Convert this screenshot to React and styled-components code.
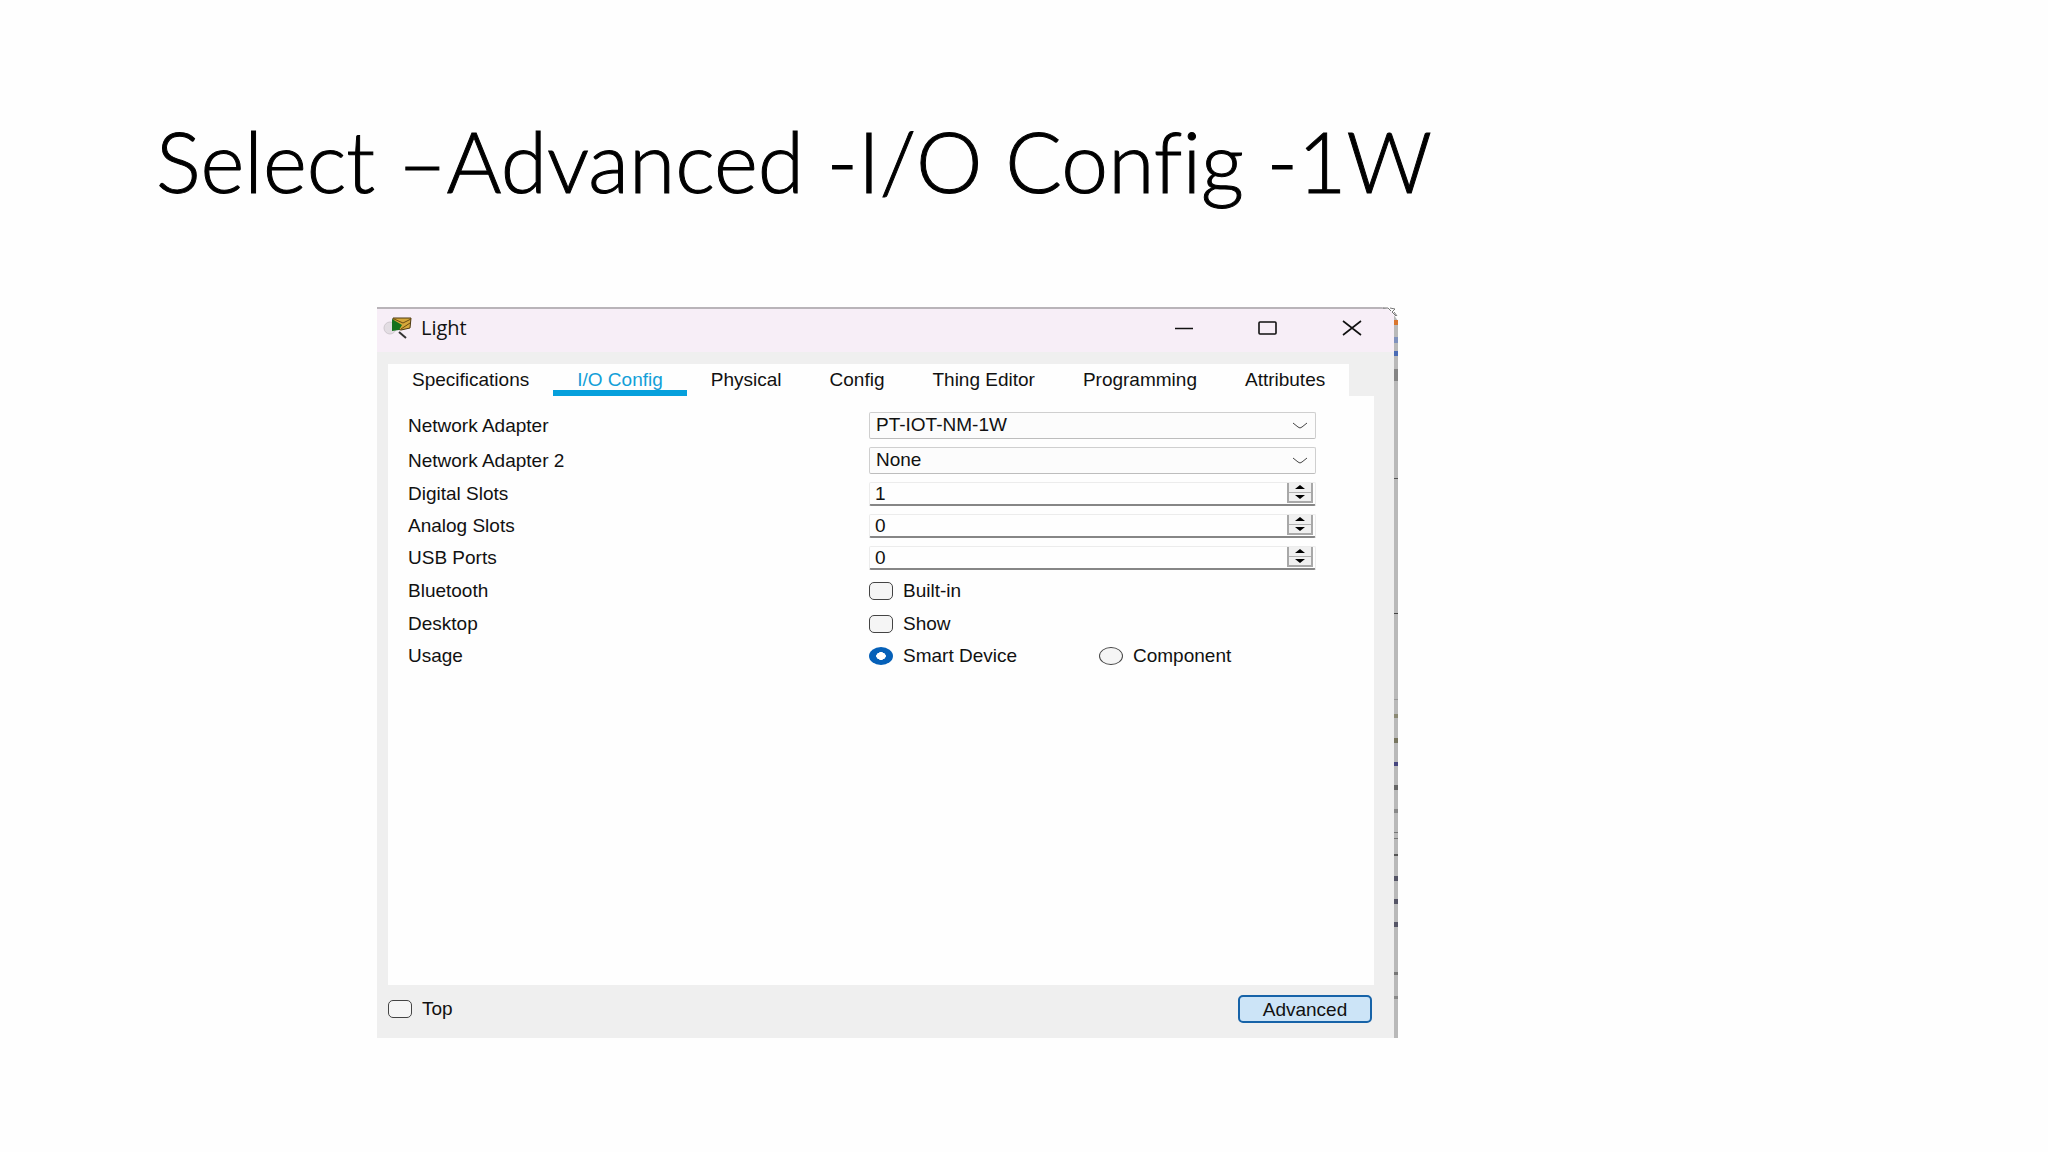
import React from 'react';
import styled, { createGlobalStyle } from 'styled-components';

const GlobalStyle = createGlobalStyle`
  *, *::before, *::after {
    box-sizing: border-box;
  }

  body {
    margin: 0;
    background: #fefefe;
    color: #111;
    font-family: "Liberation Sans", Arial, sans-serif;
    font-size: 19px;
    line-height: 24px;
  }

  button, input, select {
    font: inherit;
    color: inherit;
  }
`;

const Slide = styled.main`
  display: flex;
  flex-direction: column;
  min-height: 100vh;
  padding: 111px 156px 114px;
`;

const Title = styled.h1`
  margin: 0 0 96px;
  font-family: Lato, sans-serif;
  font-size: 84px;
  font-variant-ligatures: none;
  font-weight: 300;
  line-height: 100px;
  color: #000;
  -webkit-text-stroke: 1px #000;
`;

const Window = styled.section`
  position: relative;
  display: flex;
  flex: 1;
  flex-direction: column;
  width: 100%;
  max-width: 1021px;
  margin-left: 221px;
  border-top: 2px solid #b9b4b9;
  border-right: 4px solid #b9b9b9;
  background: #efefef;
`;

const TitleBar = styled.header`
  display: flex;
  align-items: center;
  height: 43px;
  padding: 0 30px 5px 6px;
  background: #f7eef7;
`;

const WindowName = styled.h2`
  flex: 1;
  margin: 0 0 0 8px;
  font-family: "Open Sans", sans-serif;
  font-size: 20px;
  font-weight: 400;
`;

const WindowButtons = styled.div`
  display: flex;
  gap: 60px;
`;

const IconButton = styled.button`
  display: flex;
  padding: 0;
  border: 0;
  background: none;
`;

const Body = styled.div`
  display: flex;
  flex: 1;
  flex-direction: column;
  padding: 12px 20px 0 11px;
`;

const Tabs = styled.nav`
  display: flex;
  align-self: flex-start;
  height: 32px;
  background: #fefefe;
`;

const Tab = styled.button`
  padding: 6px 24px 0;
  border: 0;
  border-bottom: 6px solid ${({ $active }) => ($active ? '#06a0dc' : 'transparent')};
  background: none;
  line-height: 20px;
  white-space: nowrap;

  && {
    color: ${({ $active }) => ($active ? '#129fd8' : '#111')};
  }
`;

const Panel = styled.form`
  display: flex;
  flex: 1;
  flex-direction: column;
  gap: 8px;
  padding: 16px 58px 16px 20px;
  background: #fefefe;
`;

const Row = styled.div`
  display: grid;
  grid-template-columns: 461fr 447fr;
  align-items: center;
  height: ${({ $height }) => $height}px;
`;

const SelectBox = styled.div`
  position: relative;
  height: 27px;
`;

const Select = styled.select`
  appearance: none;
  width: 100%;
  height: 100%;
  padding: 0 40px 2px 6px;
  border: 1px solid #cfcfcf;
  border-bottom-color: #bdbdbd;
  border-radius: 2px;
  background: #fcfcfc;
`;

const SelectArrow = styled.svg`
  position: absolute;
  top: 10px;
  right: 8px;
  pointer-events: none;
`;

const SpinBox = styled.div`
  display: flex;
  height: 24px;
  padding-right: 2px;
  border: 1px solid #ececec;
  border-bottom: 2px solid #868686;
  border-radius: 2px;
`;

const SpinInput = styled.input`
  flex: 1;
  min-width: 0;
  padding: 0 5px;
  border: 0;
  background: none;
`;

const SpinButtons = styled.div`
  display: flex;
  flex-direction: column;
  width: 26px;
  height: 20px;
  border: 1px solid #a8a8a8;
  border-width: 0 2px 2px;
  background: #f0f0f0;
`;

const SpinButton = styled.button`
  display: flex;
  flex: 1;
  align-items: center;
  justify-content: center;
  padding: 0;
  border: 0;
  background: none;

  & + & {
    border-top: 1px solid #b0b0b0;
  }
`;

const Choices = styled.div`
  display: grid;
  grid-template-columns: 230fr 217fr;
`;

const Choice = styled.label`
  display: flex;
  align-items: center;
  gap: 10px;
  white-space: nowrap;
`;

const Checkbox = styled.input`
  appearance: none;
  width: 24px;
  height: 18px;
  margin: 0;
  border: 1px solid #444;
  border-radius: 5px;
  background: #f5f5f5;
`;

const Radio = styled(Checkbox)`
  border-radius: 50%;

  &:checked {
    border: 0;
    background: radial-gradient(ellipse 5px 4px, #fff 90%, #0560b8 100%);
  }
`;

const Footer = styled.footer`
  display: flex;
  align-items: center;
  justify-content: space-between;
  height: 53px;
  padding: 0 22px 5px 11px;
`;

const AdvancedButton = styled.button`
  width: 134px;
  height: 28px;
  padding: 1px 0 0;
  border: 2px solid #1763a8;
  border-radius: 5px;
  background: #cce4f7;
`;

const EdgeMarks = styled.svg`
  position: absolute;
  top: -2px;
  right: -4px;
`;

const tabs = [
  'Specifications',
  'I/O Config',
  'Physical',
  'Config',
  'Thing Editor',
  'Programming',
  'Attributes',
];

const adapters = [
  { id: 'adapter-1', label: 'Network Adapter', value: 'PT-IOT-NM-1W' },
  { id: 'adapter-2', label: 'Network Adapter 2', value: 'None' },
];

const counters = [
  { id: 'digital-slots', label: 'Digital Slots', value: '1' },
  { id: 'analog-slots', label: 'Analog Slots', value: '0' },
  { id: 'usb-ports', label: 'USB Ports', value: '0' },
];

// [offset from the top, height, colour]
const edgeMarks = [
  [13, 5, '#d9762f'],
  [30, 6, '#8092bd'],
  [44, 5, '#4a6bb5'],
  [62, 12, '#858585'],
  [171, 1, '#555'],
  [306, 1, '#444'],
  [392, 1, '#999'],
  [407, 4, '#8c8a75'],
  [431, 5, '#77755f'],
  [455, 4, '#45457e'],
  [478, 5, '#666'],
  [502, 4, '#888'],
  [525, 1, '#777'],
  [531, 1, '#777'],
  [547, 2, '#555'],
  [569, 5, '#556'],
  [592, 5, '#556'],
  [615, 5, '#556'],
  [665, 3, '#777'],
  [689, 3, '#888'],
];

function AppIcon() {
  return (
    <svg width="30" height="22" viewBox="0 0 30 22" aria-hidden="true">
      <ellipse cx="7" cy="11" rx="6" ry="6" fill="#e3dde3" stroke="#cfc8cf" />
      <path d="M10 1h18l-1 10-9 2-8-2z" fill="#d6a83a" stroke="#4d3a12" />
      <path d="M11 2l9 4 8-4M18 12l9-6" fill="none" stroke="#6b4c12" />
      <path d="M9 2l10 6-3 5-7 1z" fill="#16721d" />
      <path d="M16 15l7 6" stroke="#333" strokeWidth="2" />
    </svg>
  );
}

function Spin({ id, label, value }) {
  return (
    <SpinBox>
      <SpinInput id={id} type="text" inputMode="numeric" defaultValue={value} />
      <SpinButtons>
        <SpinButton type="button" aria-label={`Increase ${label}`}>
          <svg width="10" height="4" viewBox="0 0 10 4">
            <path d="M0 4l5-4 5 4z" />
          </svg>
        </SpinButton>
        <SpinButton type="button" aria-label={`Decrease ${label}`}>
          <svg width="10" height="4" viewBox="0 0 10 4">
            <path d="M0 0l5 4 5-4z" />
          </svg>
        </SpinButton>
      </SpinButtons>
    </SpinBox>
  );
}

function App() {
  return (
    <>
      <GlobalStyle />
      <Slide>
        <Title>Select –Advanced -I/O Config -1W</Title>

        <Window>
          <TitleBar>
            <AppIcon />
            <WindowName>Light</WindowName>
            <WindowButtons>
              <IconButton aria-label="Minimize">
                <svg width="24" height="16" viewBox="0 0 24 16" fill="none" stroke="#111" strokeWidth="1.5">
                  <path d="M3 8.5h18" />
                </svg>
              </IconButton>
              <IconButton aria-label="Maximize">
                <svg width="24" height="16" viewBox="0 0 24 16" fill="none" stroke="#111" strokeWidth="1.6">
                  <rect x="3" y="2" width="17" height="12" rx="1" />
                </svg>
              </IconButton>
              <IconButton aria-label="Close">
                <svg width="24" height="16" viewBox="0 0 24 16" fill="none" stroke="#111" strokeWidth="1.6">
                  <path d="M3 1l18 14M21 1L3 15" />
                </svg>
              </IconButton>
            </WindowButtons>
          </TitleBar>

          <Body>
            <Tabs>
              {tabs.map((tab) => (
                <Tab key={tab} type="button" $active={tab === 'I/O Config'}>
                  {tab}
                </Tab>
              ))}
            </Tabs>

            <Panel>
              {adapters.map(({ id, label, value }) => (
                <Row key={id} $height={27}>
                  <label htmlFor={id}>{label}</label>
                  <SelectBox>
                    <Select id={id} defaultValue={value}>
                      <option>{value}</option>
                    </Select>
                    <SelectArrow width="16" height="8" viewBox="0 0 16 8" fill="none" stroke="#444">
                      <path d="M1 1l5 4q2 2 4 0l5-4" />
                    </SelectArrow>
                  </SelectBox>
                </Row>
              ))}
              {counters.map((counter) => (
                <Row key={counter.id} $height={24}>
                  <label htmlFor={counter.id}>{counter.label}</label>
                  <Spin {...counter} />
                </Row>
              ))}
              <Row $height={25}>
                <span>Bluetooth</span>
                <Choice>
                  <Checkbox type="checkbox" />
                  Built-in
                </Choice>
              </Row>
              <Row $height={25}>
                <span>Desktop</span>
                <Choice>
                  <Checkbox type="checkbox" />
                  Show
                </Choice>
              </Row>
              <Row $height={24}>
                <span>Usage</span>
                <Choices>
                  <Choice>
                    <Radio type="radio" name="usage" defaultChecked />
                    Smart Device
                  </Choice>
                  <Choice>
                    <Radio type="radio" name="usage" />
                    Component
                  </Choice>
                </Choices>
              </Row>
            </Panel>
          </Body>

          <Footer>
            <Choice>
              <Checkbox type="checkbox" />
              Top
            </Choice>
            <AdvancedButton type="button">Advanced</AdvancedButton>
          </Footer>

          <EdgeMarks width="16" height="731" aria-hidden="true">
            <path d="M0 0h16v14L12 8 8 3z" fill="#fefefe" />
            <path d="M1 1h5l3 3M8 1l5 1-3 3 4 4M12 5l3 4" fill="none" stroke="#777" />
            {edgeMarks.map(([y, height, fill]) => (
              <rect key={y} x="12" y={y} width="4" height={height} fill={fill} />
            ))}
          </EdgeMarks>
        </Window>
      </Slide>
    </>
  );
}

export default App;
